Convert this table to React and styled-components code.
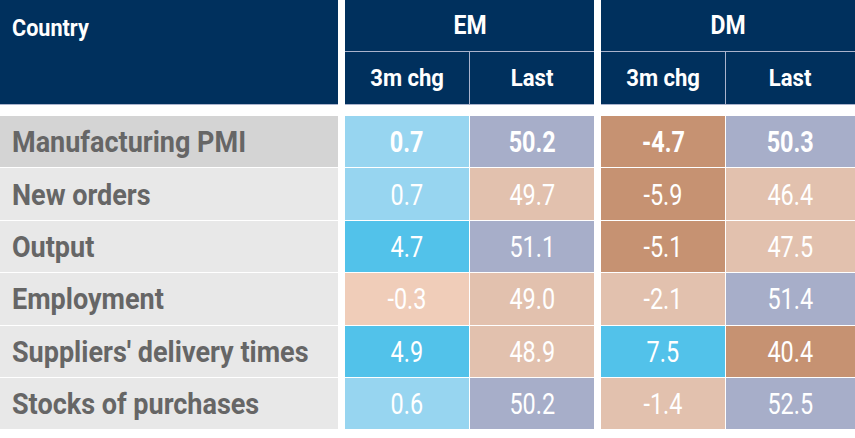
import styled, { createGlobalStyle } from 'styled-components';

const GlobalStyle = createGlobalStyle`
	html, body {
		margin: 0;
		padding: 0;
		background: #fff;
	}
	body {
		font-family: "Roboto", "Liberation Sans", sans-serif;
	}
`;

const NAVY = '#00305d';
const LINE = '#aab3cc';

const fills = {
	lb: '#97d5f0',
	bb: '#52c2ea',
	lav: '#a7aec9',
	tan: '#e2c1ae',
	dk: '#c69272',
	peach: '#f0cdb9',
};

const COLS = '338px 130px 124px 130px 1fr';

const Table = styled.div`
	width: 855px;
	height: 438px;
	overflow: hidden;
	background: #fff;
`;

const Head = styled.div`
	display: grid;
	grid-template-columns: ${COLS};
	grid-template-rows: 52px 53px;
	column-gap: 1px;
	color: #fff;
	font-weight: 700;
`;

// condensed look: Roboto squeezed horizontally
const Squeeze = styled.span`
	display: inline-block;
	white-space: nowrap;
	transform: scaleX(${(p) => p.$x || 0.85});
	transform-origin: ${(p) => (p.$left ? 'left center' : 'center')};
`;

const CountryCell = styled.div`
	grid-row: span 2;
	background: ${NAVY};
	border-bottom: 1px solid ${LINE};
	padding-left: 12px;
	line-height: 56px;
	font-size: 24px;
`;

const GroupCell = styled.div`
	grid-column: ${(p) => p.$col} / span 2;
	margin-left: 6px;
	background: ${NAVY};
	border-bottom: 1px solid ${LINE};
	display: flex;
	align-items: center;
	justify-content: center;
	font-size: 25px;
`;

const SubCell = styled.div`
	background: ${NAVY};
	border-bottom: 1px solid ${LINE};
	margin-left: ${(p) => (p.$first ? '6px' : '0')};
	border-right: ${(p) => (p.$first ? `1px solid ${LINE}` : 'none')};
	margin-right: ${(p) => (p.$first ? '-1px' : '0')};
	display: flex;
	align-items: center;
	justify-content: center;
	font-size: 24px;
`;

const Body = styled.div`
	display: grid;
	grid-template-columns: ${COLS};
	grid-auto-rows: 51.4px;
	column-gap: 1px;
	row-gap: 1px;
	margin-top: 11px;
`;

const Label = styled.div`
	background: ${(p) => (p.$head ? '#d4d4d4' : '#e8e8e8')};
	color: #666;
	font-weight: 700;
	font-size: 30px;
	padding-left: 12px;
	display: flex;
	align-items: center;
`;

const Value = styled.div`
	background: ${(p) => fills[p.$tone]};
	margin-left: ${(p) => (p.$first ? '6px' : '0')};
	color: #fff;
	font-weight: ${(p) => (p.$head ? 700 : 400)};
	font-size: 30px;
	display: flex;
	align-items: center;
	justify-content: center;
`;

const rows = [
	{ label: 'Manufacturing PMI', head: true, cells: [['0.7', 'lb'], ['50.2', 'lav'], ['-4.7', 'dk'], ['50.3', 'lav']] },
	{ label: 'New orders', cells: [['0.7', 'lb'], ['49.7', 'tan'], ['-5.9', 'dk'], ['46.4', 'tan']] },
	{ label: 'Output', cells: [['4.7', 'bb'], ['51.1', 'lav'], ['-5.1', 'dk'], ['47.5', 'tan']] },
	{ label: 'Employment', cells: [['-0.3', 'peach'], ['49.0', 'tan'], ['-2.1', 'tan'], ['51.4', 'lav']] },
	{ label: "Suppliers' delivery times", cells: [['4.9', 'bb'], ['48.9', 'tan'], ['7.5', 'bb'], ['40.4', 'dk']] },
	{ label: 'Stocks of purchases', cells: [['0.6', 'lb'], ['50.2', 'lav'], ['-1.4', 'tan'], ['52.5', 'lav']] },
];

const App = () => {
	return (
		<Table>
			<GlobalStyle />
			<Head>
				<CountryCell>
					<Squeeze $left $x={0.9}>Country</Squeeze>
				</CountryCell>
				<GroupCell $col={2}><Squeeze $x={0.92}>EM</Squeeze></GroupCell>
				<GroupCell $col={4}><Squeeze $x={0.92}>DM</Squeeze></GroupCell>
				<SubCell $first><Squeeze $x={0.92}>3m chg</Squeeze></SubCell>
				<SubCell><Squeeze $x={0.92}>Last</Squeeze></SubCell>
				<SubCell $first><Squeeze $x={0.92}>3m chg</Squeeze></SubCell>
				<SubCell><Squeeze $x={0.92}>Last</Squeeze></SubCell>
			</Head>
			<Body>
				{rows.map((r) => (
					<>
						<Label key={r.label} $head={r.head}>
							<Squeeze $left $x={0.9}>{r.label}</Squeeze>
						</Label>
						{r.cells.map(([v, tone], i) => (
							<Value key={r.label + i} $tone={tone} $first={i % 2 === 0} $head={r.head}>
								<Squeeze $x={0.78}>{v}</Squeeze>
							</Value>
						))}
					</>
				))}
			</Body>
		</Table>
	);
};

export default App;
